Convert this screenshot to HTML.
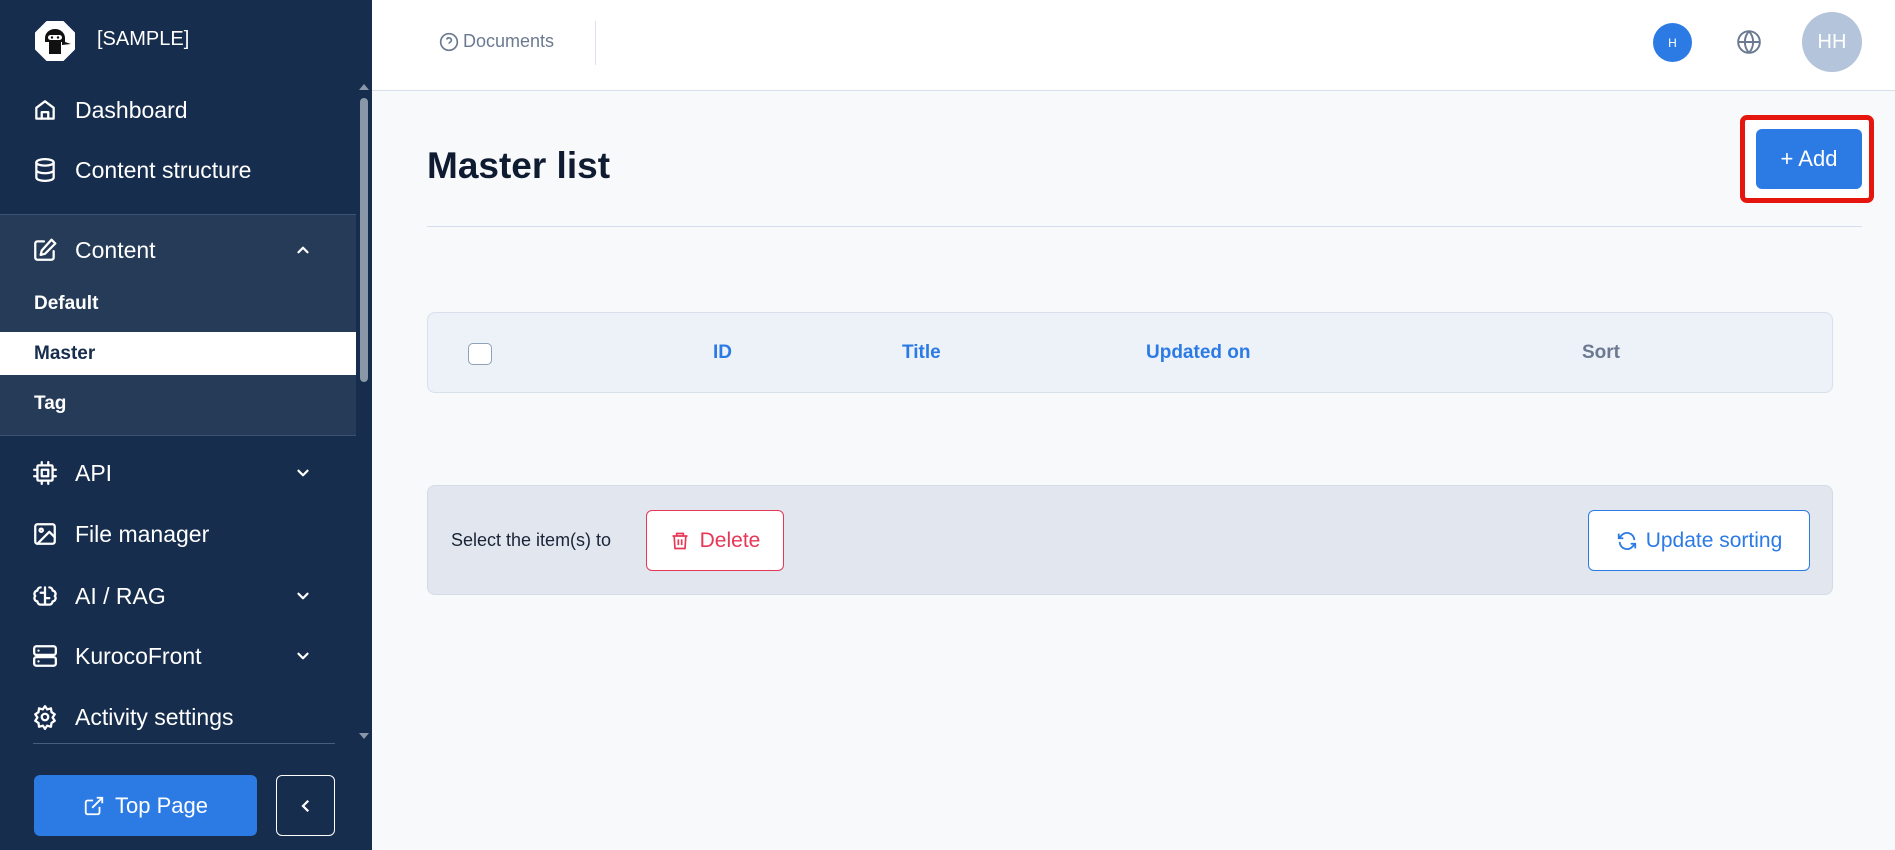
<!DOCTYPE html>
<html><head><meta charset="utf-8"><style>
*{box-sizing:border-box;margin:0;padding:0}
body{width:1895px;height:850px;overflow:hidden;font-family:"Liberation Sans",sans-serif;background:#f8f9fb;position:relative}
.sb{position:absolute;left:0;top:0;width:372px;height:850px;background:#172d4d;color:#fff}
.it{position:absolute;left:0;width:356px;height:50px;display:flex;align-items:center;font-size:23px}
.it svg{position:absolute;left:32px;width:26px;height:26px;fill:none;stroke:#fff;stroke-width:2.1;stroke-linecap:round;stroke-linejoin:round}
.it span{position:absolute;left:75px}
.it .ch{left:auto;right:44px;width:18px;height:18px}
.grp{position:absolute;left:0;top:214px;width:356px;height:222px;background:#253b58;border-top:1px solid #3c5273;border-bottom:1px solid #3c5273}
.sub{position:absolute;left:0;width:356px;height:43px;display:flex;align-items:center;padding-left:34px;font-size:19px;font-weight:bold}
.hdr{position:absolute;left:372px;top:0;width:1523px;height:91px;background:#fff;border-bottom:1px solid #d6dfeb}
.abs{position:absolute}
</style></head><body>
<div class="sb">
  <svg class="abs" style="left:35px;top:21px" width="40" height="40" viewBox="0 0 40 40"><path d="M12 1h16l11 11v16L28 39H12L1 28V12z" fill="#fff" stroke="#fff" stroke-width="2" stroke-linejoin="round"/><path d="M10 17a10 9 0 0 1 20 0v4H10z" fill="#111"/><rect x="13" y="14" width="14" height="5" rx="2.5" fill="#fff"/><circle cx="17" cy="16.5" r="1.2" fill="#111"/><circle cx="23" cy="16.5" r="1.2" fill="#111"/><rect x="14" y="21" width="12" height="12" fill="#111"/><path d="M27 20l9 3-9 1z" fill="#111"/></svg>
  <div class="abs" style="left:97px;top:28px;font-size:20px">[SAMPLE]</div>
  <div class="it" style="top:85px"><svg viewBox="0 0 24 24"><path d="M4 10l8-6 8 6v10H4z"/><path d="M9 20v-6h6v6"/></svg><span>Dashboard</span></div>
  <div class="it" style="top:145px"><svg viewBox="0 0 24 24"><ellipse cx="12" cy="5" rx="8" ry="3"/><path d="M4 5v14c0 1.7 3.6 3 8 3s8-1.3 8-3V5M4 12c0 1.7 3.6 3 8 3s8-1.3 8-3"/></svg><span>Content structure</span></div>
  <div class="grp"></div>
  <div class="it" style="top:225px"><svg viewBox="0 0 24 24"><path d="M11 4H5a2 2 0 0 0-2 2v13a2 2 0 0 0 2 2h13a2 2 0 0 0 2-2v-6"/><path d="M18 2.5l3.5 3.5L12 15.5 8 16.5l1-4z"/></svg><span>Content</span><svg class="ch" viewBox="0 0 24 24" style="stroke-width:3"><path d="M6 15l6-6 6 6"/></svg></div>
  <div class="sub" style="top:282px">Default</div>
  <div class="sub" style="top:332px;background:#fff;color:#172d4d">Master</div>
  <div class="sub" style="top:382px">Tag</div>
  <div class="it" style="top:448px"><svg viewBox="0 0 24 24"><rect x="5" y="5" width="14" height="14" rx="1"/><rect x="9" y="9" width="6" height="6"/><path d="M9 2v3M15 2v3M9 19v3M15 19v3M2 9h3M2 15h3M19 9h3M19 15h3"/></svg><span>API</span><svg class="ch" viewBox="0 0 24 24" style="stroke-width:3"><path d="M6 9l6 6 6-6"/></svg></div>
  <div class="it" style="top:509px"><svg viewBox="0 0 24 24"><rect x="3" y="3" width="18" height="18" rx="2"/><circle cx="8.5" cy="8.5" r="1.5"/><path d="M21 15l-5-5L5 21"/></svg><span>File manager</span></div>
  <div class="it" style="top:571px"><svg viewBox="0 0 24 24"><path d="M12 4v16M8 4a3 3 0 0 0-3 3 3 3 0 0 0-2 5 3 3 0 0 0 2 5 3 3 0 0 0 3 3h4M16 4a3 3 0 0 1 3 3 3 3 0 0 1 2 5 3 3 0 0 1-2 5 3 3 0 0 1-3 3h-4M8 9h4M12 14h4"/></svg><span>AI / RAG</span><svg class="ch" viewBox="0 0 24 24" style="stroke-width:3"><path d="M6 9l6 6 6-6"/></svg></div>
  <div class="it" style="top:631px"><svg viewBox="0 0 24 24"><rect x="2" y="3" width="20" height="8" rx="2"/><rect x="2" y="13" width="20" height="8" rx="2"/><path d="M6 7h.01M6 17h.01"/></svg><span>KurocoFront</span><svg class="ch" viewBox="0 0 24 24" style="stroke-width:3"><path d="M6 9l6 6 6-6"/></svg></div>
  <div class="it" style="top:692px"><svg viewBox="0 0 24 24"><circle cx="12" cy="12" r="3"/><path d="M12 2l2 3 3.5-1 .5 3.5 3 2-2 3 2 3-3 2-.5 3.5-3.5-1-2 3-2-3-3.5 1-.5-3.5-3-2 2-3-2-3 3-2L6.5 4 10 5z"/></svg><span>Activity settings</span></div>
  <div class="abs" style="left:33px;top:743px;width:302px;height:1px;background:#4a5f7d"></div>
  <div class="abs" style="left:359px;top:84px;width:0;height:0;border-left:5px solid transparent;border-right:5px solid transparent;border-bottom:6px solid #8a97a8"></div>
  <div class="abs" style="left:360px;top:98px;width:8px;height:284px;border-radius:4px;background:#8a97a8"></div>
  <div class="abs" style="left:359px;top:733px;width:0;height:0;border-left:5px solid transparent;border-right:5px solid transparent;border-top:6px solid #8a97a8"></div>
  <div class="abs" style="left:34px;top:775px;width:223px;height:61px;background:#2c7be5;border-radius:6px;display:flex;align-items:center;justify-content:center;font-size:22px"><svg width="22" height="22" viewBox="0 0 24 24" fill="none" stroke="#fff" stroke-width="2" style="margin-right:10px"><path d="M18 13v6a2 2 0 0 1-2 2H5a2 2 0 0 1-2-2V8a2 2 0 0 1 2-2h6M15 3h6v6M10 14L21 3"/></svg>Top Page</div>
  <div class="abs" style="left:276px;top:775px;width:59px;height:61px;border:1.5px solid #fff;border-radius:6px"><svg class="abs" style="left:20px;top:21px" width="18" height="18" viewBox="0 0 24 24" fill="none" stroke="#fff" stroke-width="3"><path d="M15 5l-7 7 7 7"/></svg></div>
</div>
<div class="hdr">
  <div class="abs" style="left:67px;top:31px;font-size:18px;color:#6b7a90;display:flex;align-items:center"><svg width="20" height="20" viewBox="0 0 24 24" fill="none" stroke="#6b7a90" stroke-width="2" style="margin-right:4px"><circle cx="12" cy="12" r="10"/><path d="M9.1 9a3 3 0 0 1 5.8 1c0 2-3 2.5-3 4M12 17.5h.01"/></svg>Documents</div>
  <div class="abs" style="left:223px;top:21px;width:1px;height:44px;background:#dde3ec"></div>
  <div class="abs" style="left:1281px;top:23px;width:39px;height:39px;border-radius:50%;background:#2c7be5;color:#fff;font-size:12px;display:flex;align-items:center;justify-content:center">H</div>
  <svg class="abs" style="left:1364px;top:29px" width="26" height="26" viewBox="0 0 24 24" fill="none" stroke="#6b7a90" stroke-width="1.8"><circle cx="12" cy="12" r="10"/><path d="M2 12h20M12 2a15 15 0 0 1 0 20M12 2a15 15 0 0 0 0 20"/></svg>
  <div class="abs" style="left:1430px;top:12px;width:60px;height:60px;border-radius:50%;background:#b4c4da;color:#fff;font-size:20px;display:flex;align-items:center;justify-content:center">HH</div>
</div>
<div class="abs" style="left:427px;top:145px;font-size:37px;font-weight:bold;color:#0e1b30">Master list</div>
<div class="abs" style="left:1740px;top:115px;width:134px;height:88px;border:5px solid #e5160e;border-radius:7px;background:#fff"></div>
<div class="abs" style="left:1756px;top:129px;width:106px;height:60px;background:#2c7be5;border-radius:6px;color:#fff;font-size:22px;display:flex;align-items:center;justify-content:center">+ Add</div>
<div class="abs" style="left:427px;top:226px;width:1435px;height:1px;background:#d6dfeb"></div>
<div class="abs" style="left:427px;top:312px;width:1406px;height:81px;background:#edf1f8;border:1px solid #d8e0ec;border-radius:8px;font-size:19px;font-weight:bold;color:#2c7be5">
  <div class="abs" style="left:40px;top:30px;width:24px;height:22px;border:1.5px solid #8fa0b8;border-radius:5px;background:#fff"></div>
  <div class="abs" style="left:285px;top:29px">ID</div>
  <div class="abs" style="left:474px;top:29px">Title</div>
  <div class="abs" style="left:718px;top:29px">Updated on</div>
  <div class="abs" style="left:1154px;top:29px;color:#6b7a90">Sort</div>
</div>
<div class="abs" style="left:427px;top:485px;width:1406px;height:110px;background:#e2e7ef;border:1px solid #d3dbe7;border-radius:8px">
  <div class="abs" style="left:23px;top:44px;font-size:18px;color:#1a2436">Select the item(s) to</div>
  <div class="abs" style="left:218px;top:24px;width:138px;height:61px;background:#fff;border:1px solid #e63757;border-radius:6px;color:#e63757;font-size:21px;display:flex;align-items:center;justify-content:center"><svg width="20" height="22" viewBox="0 0 24 24" fill="none" stroke="#e63757" stroke-width="2" style="margin-right:10px"><path d="M3 6h18M8 6V3h8v3M5 6l1 15h12l1-15M10 10v7M14 10v7"/></svg>Delete</div>
  <div class="abs" style="left:1160px;top:24px;width:222px;height:61px;background:#fff;border:1px solid #2c7be5;border-radius:6px;color:#2c7be5;font-size:21px;display:flex;align-items:center;justify-content:center"><svg width="22" height="22" viewBox="0 0 24 24" fill="none" stroke="#2c7be5" stroke-width="2" style="margin-right:8px"><path d="M20 11A8 8 0 0 0 5.5 6.5L3 9M3 4v5h5M4 13a8 8 0 0 0 14.5 4.5L21 15M21 20v-5h-5"/></svg>Update sorting</div>
</div>
</body></html>
